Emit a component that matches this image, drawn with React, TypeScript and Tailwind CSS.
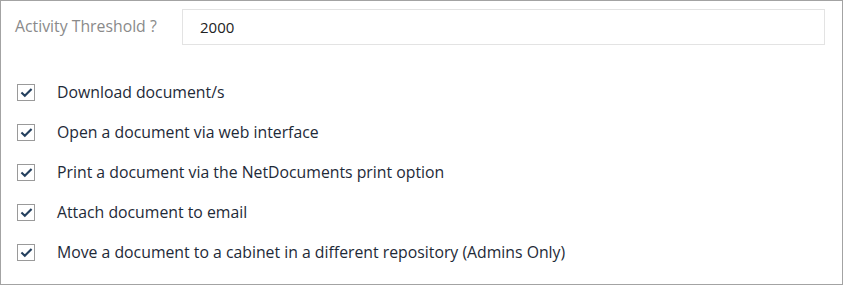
import React from 'react';

const options = [
  'Download document/s',
  'Open a document via web interface',
  'Print a document via the NetDocuments print option',
  'Attach document to email',
  'Move a document to a cabinet in a different repository (Admins Only)',
];

const CheckBox: React.FC = () => (
  <span className="flex h-[17px] w-[18px] shrink-0 items-center justify-center border border-[#9a9a9a] bg-white">
    <svg viewBox="0 0 16 16" className="h-[15px] w-[15px]">
      <path d="M2.6 8 L6.2 11.4 L13.4 4.2" fill="none" stroke="#24405e" strokeWidth="2.3" />
    </svg>
  </span>
);

export default function App() {
  return (
    <div className="h-[286px] w-[843px] bg-white" style={{ fontFamily: '"Open Sans", sans-serif' }}>
      <div className="h-[285px] w-[843px] border border-[#a3a3a3]">
        {/* Threshold */}
        <div className="flex items-center pt-[8px] pl-[14px] pr-[17px]">
          <span className="w-[167px] text-[15.8px] text-[#8a8a8a]">Activity Threshold ?</span>
          <div className="flex h-[36px] flex-1 items-center border border-[#e3e3e3] pl-[17px] text-[15px] text-[#222]">
            2000
          </div>
        </div>

        {/* Options */}
        <div className="mt-[37px] flex flex-col gap-[19px] pl-[16px]">
          {options.map((o) => (
            <label key={o} className="flex h-[21px] items-center">
              <CheckBox />
              <span className="ml-[22px] text-[15.8px] text-[#1e2a38]">{o}</span>
            </label>
          ))}
        </div>
      </div>
    </div>
  );
}
